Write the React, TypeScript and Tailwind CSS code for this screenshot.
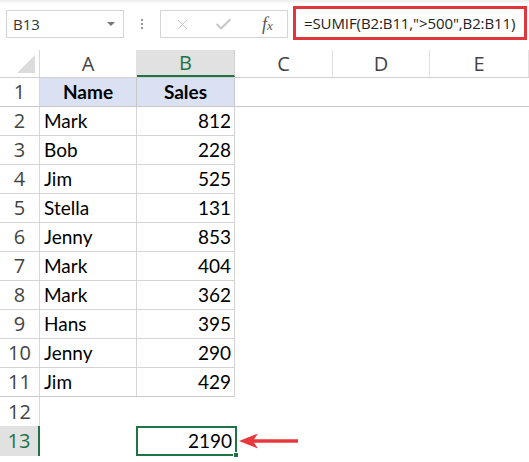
import { X, Check } from 'lucide-react'

const cols = [
    { key: 'A', width: 'w-[97px]' },
    { key: 'B', width: 'w-[98px]' },
    { key: 'C', width: 'w-[98px]' },
    { key: 'D', width: 'w-[97px]' },
    { key: 'E', width: 'w-[99px]' },
]

const data = [
    ['Mark', 812],
    ['Bob', 228],
    ['Jim', 525],
    ['Stella', 131],
    ['Jenny', 853],
    ['Mark', 404],
    ['Mark', 362],
    ['Hans', 395],
    ['Jenny', 290],
    ['Jim', 429],
] as const

const cellFont = "font-['Lato','Liberation_Sans',sans-serif]"

function Toolbar() {
    return (
        <div className="flex h-[50px] items-start bg-white pt-[10px] pl-[6px] bg-gradient-to-b from-[#ececec] from-0% to-white to-[8%]">
            <div className="flex h-[28px] w-[118px] items-center justify-between border border-[#d4d4d4] bg-white pl-[6px] pr-[8px]">
                <span className="font-['Open_Sans',sans-serif] text-[15px] text-[#333]">B13</span>
                <span className="h-0 w-0 border-x-[4px] border-t-[4px] border-x-transparent border-t-[#777]" />
            </div>
            <div className="flex h-[28px] w-[36px] flex-col items-center justify-center gap-[2px]">
                <span className="h-[2px] w-[2px] bg-[#999]" />
                <span className="h-[2px] w-[2px] bg-[#999]" />
                <span className="h-[2px] w-[2px] bg-[#999]" />
            </div>
            <div className="flex h-[28px] w-[128px] items-center border border-[#d4d4d4] bg-white">
                <X size={17} strokeWidth={1.3} className="ml-[13px] text-[#c6c6c6]" />
                <Check size={19} strokeWidth={2.4} className="ml-[23px] text-[#c6c6c6]" />
                <span className="ml-[29px] font-['Liberation_Serif',serif] text-[18px] italic text-[#555]">
                    f<span className="text-[13px]">x</span>
                </span>
            </div>
            <div className="ml-[5px] mt-[-4px] flex h-[34px] w-[234px] items-center border-[3px] border-[#e0363c] bg-white pl-[8px]">
                <span className="whitespace-nowrap font-['Open_Sans',sans-serif] text-[15px] tracking-[-0.1px] text-[#222]">
                    =SUMIF(B2:B11,"&gt;500",B2:B11)
                </span>
            </div>
        </div>
    )
}

function ColumnHeader() {
    return (
        <div className="flex h-[28px] border-b border-[#cfcfcf]">
            <div className="relative w-[40px] border-r border-[#d8d8d8]">
                <span className="absolute bottom-[4px] right-[4px] h-0 w-0 border-b-[18px] border-l-[18px] border-b-[#dcdcdc] border-l-transparent" />
            </div>
            {cols.map((c) => (
                <div
                    key={c.key}
                    className={
                        c.key === 'B'
                            ? `${c.width} flex items-center justify-center border-r border-b-2 border-[#d0d0d0] border-b-[#217346] bg-[#e1e1e1] font-['Open_Sans',sans-serif] text-[20px] text-[#217346]`
                            : `${c.width} flex items-center justify-center border-r border-[#e2e2e2] font-['Open_Sans',sans-serif] text-[20px] text-[#444]`
                    }
                >
                    {c.key}
                </div>
            ))}
        </div>
    )
}

function RowNum({ n, active }: { n: number; active?: boolean }) {
    return (
        <div
            className={
                active
                    ? "flex w-[40px] items-center justify-center border-r-2 border-[#217346] bg-[#e1e1e1] font-['Open_Sans',sans-serif] text-[20px] text-[#217346]"
                    : "flex w-[40px] items-center justify-center border-r border-[#d8d8d8] font-['Open_Sans',sans-serif] text-[20px] text-[#444]"
            }
        >
            {n}
        </div>
    )
}

export default function App() {
    return (
        <div className="h-[462px] w-[529px] overflow-hidden bg-white">
            <Toolbar />
            <ColumnHeader />

            <div className="flex h-[29px] border-b border-[#c8c8c8]">
                <RowNum n={1} />
                <div className={`flex w-[97px] items-center justify-center border-r border-[#c8c8c8] bg-[#d9e1f2] ${cellFont} text-[19px] font-bold text-black`}>
                    Name
                </div>
                <div className={`flex w-[98px] items-center justify-center border-r border-[#c8c8c8] bg-[#d9e1f2] ${cellFont} text-[19px] font-bold text-black`}>
                    Sales
                </div>
            </div>

            {data.map(([name, sales], i) => (
                <div key={i} className={i === data.length - 1 ? 'flex h-[29px] border-b border-[#c8c8c8] w-[235px]' : 'flex h-[29px] border-b border-[#d4d4d4] w-[235px]'}>
                    <RowNum n={i + 2} />
                    <div className={`flex w-[97px] items-center pl-[4px] border-r border-[#d4d4d4] ${cellFont} text-[19px] text-black`}>
                        {name}
                    </div>
                    <div className={`flex w-[98px] items-center justify-end pr-[3px] border-r border-[#d4d4d4] ${cellFont} text-[19px] text-black`}>
                        {sales}
                    </div>
                </div>
            ))}

            <div className="flex h-[29px]">
                <RowNum n={12} />
            </div>

            <div className="flex h-[30px]">
                <RowNum n={13} active />
                <div className="w-[96px]" />
                <div className={`relative flex w-[101px] items-center justify-end border-2 border-[#217346] pr-[3px] ${cellFont} text-[19px] text-black`}>
                    2190
                    <span className="absolute -bottom-[4px] -right-[4px] h-[6px] w-[6px] border border-white bg-[#217346]" />
                </div>
                <div className="flex items-center pl-[1px]">
                    <svg width="62" height="18" viewBox="0 0 62 18">
                        <path d="M1 9 L20 1.5 L16 7.3 L60 7.3 L60 10.7 L16 10.7 L20 16.5 Z" fill="#e8383d" />
                    </svg>
                </div>
            </div>
        </div>
    )
}
